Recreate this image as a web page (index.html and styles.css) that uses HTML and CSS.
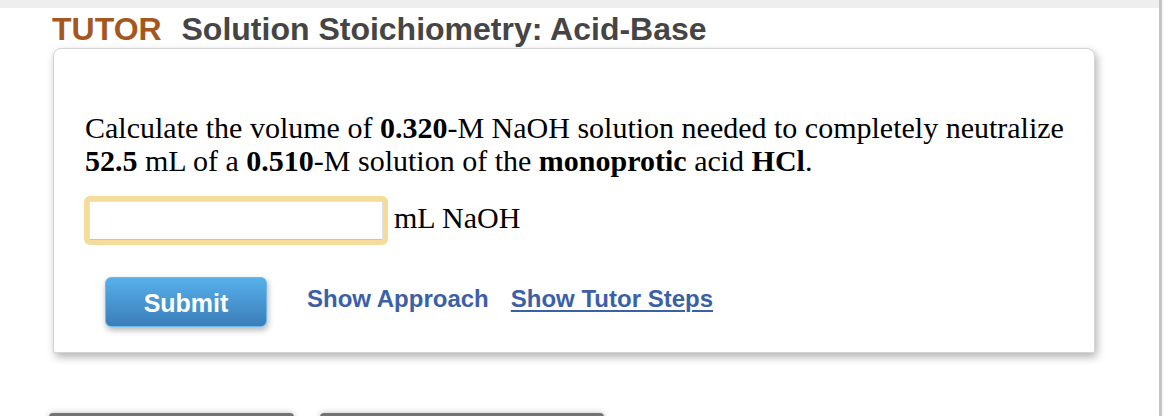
FILE: index.html
```html
<html>
  <head>
    <title>TUTOR Solution Stoichiometry: Acid-Base</title>
    <link rel="stylesheet" href="styles.css">
  </head>

  <body>
    <div class="page">
      <div class="top-strip"></div>
      <h1 class="tutor-title">
        <span class="tutor-tag">TUTOR</span>
        <span class="tutor-name">Solution Stoichiometry: Acid-Base</span>
      </h1>

      <div class="card">
        <p class="question">
          Calculate the volume of <b>0.320</b>-M NaOH solution needed to
          completely neutralize <b>52.5</b> mL of a <b>0.510</b>-M solution of
          the <b>monoprotic</b> acid <b>HCl</b>.
        </p>

        <div class="answer-row">
          <input class="answer" type="text" />
          <span class="unit">mL NaOH</span>
        </div>

        <div class="actions">
          <button class="submit" type="button">Submit</button>
          <a class="tutor-link" href="#">Show Approach</a>
          <a class="tutor-link underline" href="#">Show Tutor Steps</a>
        </div>
      </div>

      <div class="tabs">
        <div class="tab"></div>
        <div class="tab wide"></div>
      </div>
    </div>
  </body>
</html>
```

FILE: styles.css
```css
html,
body {
  margin: 0;
  height: 416px;
  overflow: hidden;
  background: #fafafa;
}

.page {
  width: 1159px;
  height: 416px;
  overflow: hidden;
  background: #fff;
  border-right: 3px solid #c4c4c4;
}

.top-strip {
  height: 8px;
  background: #eeeeee;
}

.tutor-title {
  margin: 0 0 3px;
  padding: 5px 0 0 52px;
  font: bold 32px/32px "Liberation Sans", Arial, sans-serif;
  white-space: nowrap;
}

.tutor-tag {
  color: #a4581f;
  margin-right: 11px;
}

.tutor-name {
  color: #454545;
}

.card {
  box-sizing: border-box;
  margin-left: 53px;
  width: 1042px;
  height: 305px;
  padding: 0 8px 0 31px;
  background: #fff;
  border: 1px solid #d4d4d4;
  border-radius: 8px 8px 2px 2px;
  box-shadow: 2px 4px 8px rgba(0, 0, 0, 0.3);
}

.question {
  margin: 62px 0 0;
  font: 30px/33px "Liberation Serif", "Times New Roman", serif;
  color: #000;
}

.answer-row {
  display: flex;
  align-items: flex-start;
  margin-top: 24px;
}

.answer {
  box-sizing: border-box;
  width: 294px;
  height: 39px;
  margin-left: 4px;
  border: 1px solid #e2e2e2;
  border-bottom-color: #c4c4c4;
  border-radius: 2px;
  box-shadow: 0 0 0 5px #f5dc9b;
  outline: none;
  font: 22px "Liberation Serif", serif;
}

.unit {
  margin: 1px 0 0 11px;
  font: 30px/32px "Liberation Serif", "Times New Roman", serif;
  color: #000;
}

.actions {
  display: flex;
  align-items: flex-start;
  margin-top: 37px;
}

.submit {
  box-sizing: border-box;
  width: 162px;
  height: 50px;
  margin-left: 20px;
  padding: 3px 0 0;
  border: 1px solid #6cb9ec;
  border-radius: 6px;
  background: linear-gradient(#57b0ea, #3a7db9);
  box-shadow: 1px 3px 6px rgba(0, 0, 0, 0.3);
  color: #fff;
  font: bold 25px "Liberation Sans", Arial, sans-serif;
}

.tutor-link {
  margin: 8px 0 0 40px;
  font: bold 24px/28px "Liberation Sans", Arial, sans-serif;
  color: #3b60a6;
  text-decoration: none;
  white-space: nowrap;
}

.tutor-link + .tutor-link {
  margin-left: 22px;
}

.underline {
  text-decoration: underline;
  text-decoration-thickness: 2px;
  text-underline-offset: 3px;
}

.tabs {
  display: flex;
  gap: 26px;
  margin: 60px 0 0 49px;
}

.tab {
  width: 245px;
  height: 30px;
  background: #737373;
  border-radius: 4px 4px 0 0;
  box-shadow: 0 0 6px rgba(0, 0, 0, 0.25);
}

.tab.wide {
  width: 284px;
}
```
